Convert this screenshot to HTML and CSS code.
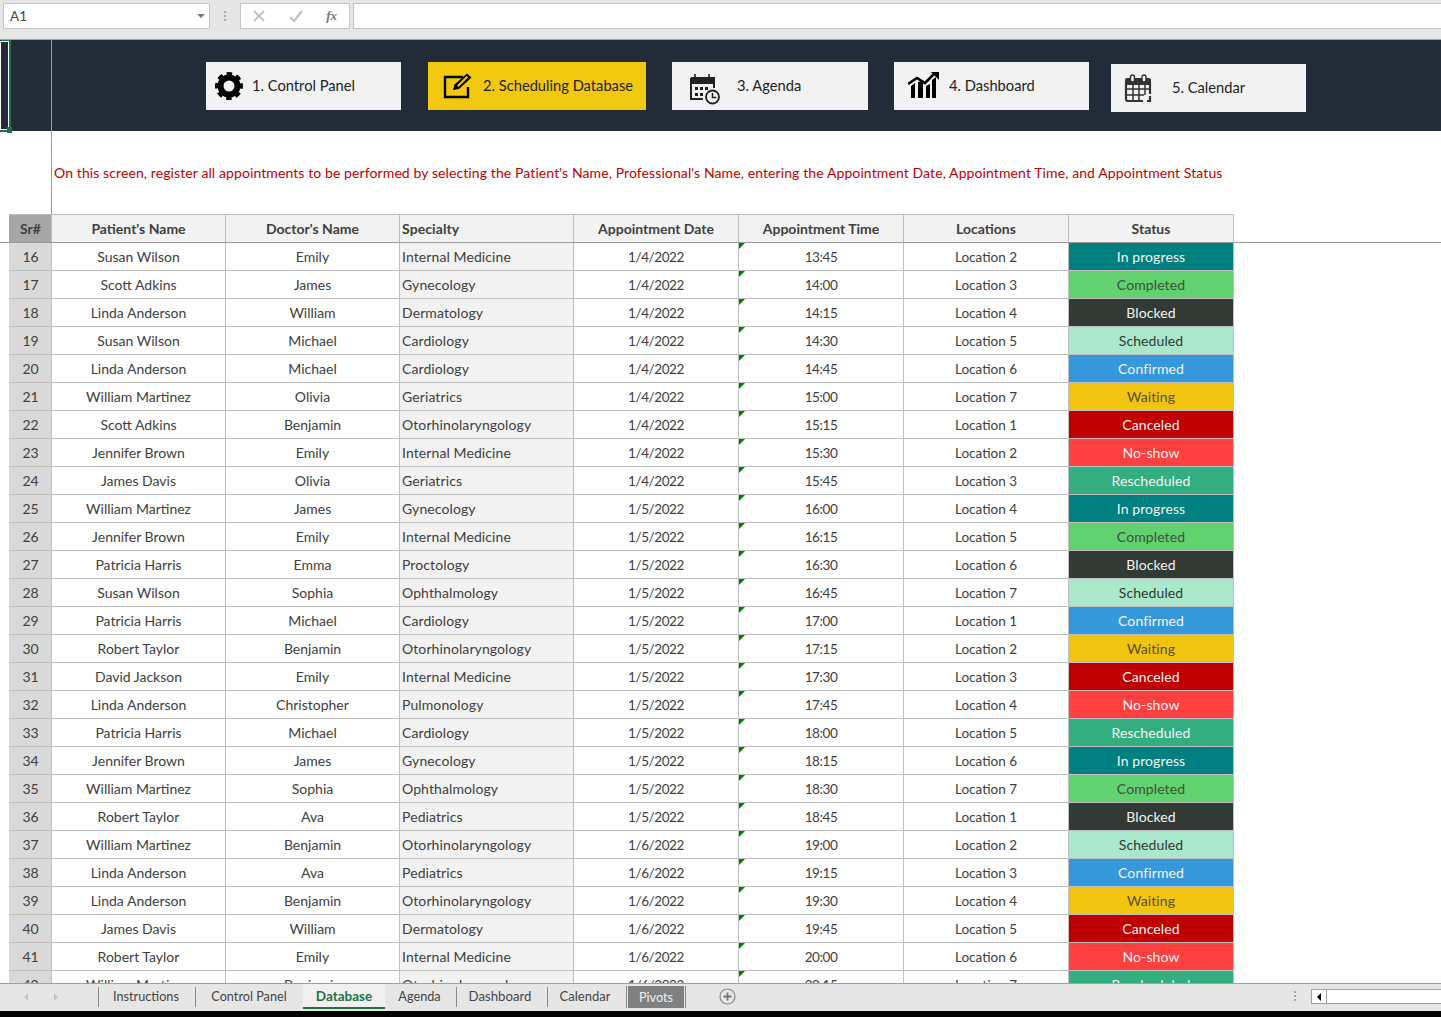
FILE: index.html
```html
<!DOCTYPE html>
<html lang="en">
<head>
    <meta charset="UTF-8">
    <meta name="viewport" content="width=device-width, initial-scale=1.0">
    <title>Scheduling Database</title>
    <link rel="stylesheet" href="styles.css">
</head>
<body>
    <div class="formula-bar">
        <div class="name-box">A1<span class="name-arrow"></span></div>
        <div class="bar-dots"></div>
        <div class="formula-buttons">
            <svg width="14" height="14" viewBox="0 0 14 14"><path d="M2 2l10 10M12 2L2 12" stroke="#c4c4c4" stroke-width="2" fill="none"/></svg>
            <svg width="14" height="14" viewBox="0 0 14 14"><path d="M1 8l4 4 8-10" stroke="#c4c4c4" stroke-width="2.4" fill="none"/></svg>
            <span class="fx">fx</span>
        </div>
        <div class="formula-input"></div>
    </div>

    <div class="sheet">
        <div class="frozen">
            <div class="banner">
                <div class="corner"></div>
                <div class="nav-item nav-control">
                    <svg width="30" height="30" viewBox="0 0 30 30">
                        <circle cx="15" cy="15" r="8.500" fill="none" stroke="#000" stroke-width="6"/>
                        <circle cx="15" cy="15" r="11.500" fill="none" stroke="#000" stroke-width="5" stroke-dasharray="5.030 4" transform="rotate(-12.500 15 15)"/>
                    </svg>
                    <span>1. Control Panel</span>
                </div>
                <div class="nav-item nav-database active">
                    <svg width="30" height="28" viewBox="0 0 30 28">
                        <path d="M20 5H2v20h23V15" fill="none" stroke="#000" stroke-width="2.400"/>
                        <path d="M10 18l1.500-5.500L24 1.500l4.500 4L16 17z" fill="#000"/>
                        <path d="M14 13.500l9.500-9.500 1.500 1.500-9.500 9.500z" fill="#f2c90f"/>
                    </svg>
                    <span>2. Scheduling Database</span>
                </div>
                <div class="nav-item nav-agenda">
                    <svg width="32" height="32" viewBox="0 0 32 32">
                        <path d="M2 5h23v10M2 5v21h12" fill="none" stroke="#222" stroke-width="2"/>
                        <path d="M2 5h23v6H2z" fill="#222"/>
                        <path d="M6 1v6M20 1v6" stroke="#222" stroke-width="1.600"/>
                        <path d="M6 14h3v3H6zM11 14h3v3h-3zM16 14h3v3h-3zM6 20h3v3H6zM11 20h3v3h-3z" fill="#222"/>
                        <circle cx="23.500" cy="24" r="6.500" fill="#f2f2f2" stroke="#222" stroke-width="1.800"/>
                        <path d="M23.500 20v4.500h4" fill="none" stroke="#222" stroke-width="1.600"/>
                    </svg>
                    <span>3. Agenda</span>
                </div>
                <div class="nav-item nav-dashboard">
                    <svg width="32" height="28" viewBox="0 0 32 28">
                        <path d="M0 12l9-6 8 5 10-10" fill="none" stroke="#000" stroke-width="2.600"/>
                        <path d="M23 0h8v8z" fill="#000"/>
                        <path d="M3 14l4-3v15H3zM10 10l5-1v17h-5zM18 14l4-2v14h-4zM24 8l4-3v21h-4z" fill="#000"/>
                    </svg>
                    <span>4. Dashboard</span>
                </div>
                <div class="nav-item nav-calendar">
                    <svg width="28" height="28" viewBox="0 0 28 28">
                        <path d="M1 6q0-2 2-2h22q2 0 2 2v5H1z" fill="#333"/>
                        <path d="M2 8v17q0 2 2 2h15M26 8v12M26 22v5h-3" fill="none" stroke="#333" stroke-width="2.200"/>
                        <rect x="6.500" y="1" width="4" height="7" rx="2" fill="#f2f2f2" stroke="#333" stroke-width="1.400"/>
                        <rect x="18" y="1" width="4" height="7" rx="2" fill="#f2f2f2" stroke="#333" stroke-width="1.400"/>
                        <path d="M2 15h24M2 21h18M9 10v17M15 10v17M21 10v11" fill="none" stroke="#333" stroke-width="1.500"/>
                    </svg>
                    <span>5. Calendar</span>
                </div>
            </div>
            <div class="note-row">
                <div class="corner"></div>
                <p class="note">On this screen, register all appointments to be performed by selecting the Patient's Name, Professional's Name, entering the Appointment Date, Appointment Time, and Appointment Status</p>
            </div>
            <div class="row head">
                <div class="sr">Sr#</div><div>Patient's Name</div><div>Doctor's Name</div><div class="spec">Specialty</div><div>Appointment Date</div><div>Appointment Time</div><div>Locations</div><div>Status</div>
            </div>
            <div class="cell-cursor"></div>
        </div>

        <div class="rows">
            <div class="row"><div class="sr">16</div><div>Susan Wilson</div><div>Emily</div><div class="spec">Internal Medicine</div><div class="date">1/4/2022</div><div class="time">13:45</div><div class="loc">Location 2</div><div class="st progress">In progress</div></div>
            <div class="row"><div class="sr">17</div><div>Scott Adkins</div><div>James</div><div class="spec">Gynecology</div><div class="date">1/4/2022</div><div class="time">14:00</div><div class="loc">Location 3</div><div class="st completed">Completed</div></div>
            <div class="row"><div class="sr">18</div><div>Linda Anderson</div><div>William</div><div class="spec">Dermatology</div><div class="date">1/4/2022</div><div class="time">14:15</div><div class="loc">Location 4</div><div class="st blocked">Blocked</div></div>
            <div class="row"><div class="sr">19</div><div>Susan Wilson</div><div>Michael</div><div class="spec">Cardiology</div><div class="date">1/4/2022</div><div class="time">14:30</div><div class="loc">Location 5</div><div class="st scheduled">Scheduled</div></div>
            <div class="row"><div class="sr">20</div><div>Linda Anderson</div><div>Michael</div><div class="spec">Cardiology</div><div class="date">1/4/2022</div><div class="time">14:45</div><div class="loc">Location 6</div><div class="st confirmed">Confirmed</div></div>
            <div class="row"><div class="sr">21</div><div>William Martinez</div><div>Olivia</div><div class="spec">Geriatrics</div><div class="date">1/4/2022</div><div class="time">15:00</div><div class="loc">Location 7</div><div class="st waiting">Waiting</div></div>
            <div class="row"><div class="sr">22</div><div>Scott Adkins</div><div>Benjamin</div><div class="spec">Otorhinolaryngology</div><div class="date">1/4/2022</div><div class="time">15:15</div><div class="loc">Location 1</div><div class="st canceled">Canceled</div></div>
            <div class="row"><div class="sr">23</div><div>Jennifer Brown</div><div>Emily</div><div class="spec">Internal Medicine</div><div class="date">1/4/2022</div><div class="time">15:30</div><div class="loc">Location 2</div><div class="st noshow">No-show</div></div>
            <div class="row"><div class="sr">24</div><div>James Davis</div><div>Olivia</div><div class="spec">Geriatrics</div><div class="date">1/4/2022</div><div class="time">15:45</div><div class="loc">Location 3</div><div class="st rescheduled">Rescheduled</div></div>
            <div class="row"><div class="sr">25</div><div>William Martinez</div><div>James</div><div class="spec">Gynecology</div><div class="date">1/5/2022</div><div class="time">16:00</div><div class="loc">Location 4</div><div class="st progress">In progress</div></div>
            <div class="row"><div class="sr">26</div><div>Jennifer Brown</div><div>Emily</div><div class="spec">Internal Medicine</div><div class="date">1/5/2022</div><div class="time">16:15</div><div class="loc">Location 5</div><div class="st completed">Completed</div></div>
            <div class="row"><div class="sr">27</div><div>Patricia Harris</div><div>Emma</div><div class="spec">Proctology</div><div class="date">1/5/2022</div><div class="time">16:30</div><div class="loc">Location 6</div><div class="st blocked">Blocked</div></div>
            <div class="row"><div class="sr">28</div><div>Susan Wilson</div><div>Sophia</div><div class="spec">Ophthalmology</div><div class="date">1/5/2022</div><div class="time">16:45</div><div class="loc">Location 7</div><div class="st scheduled">Scheduled</div></div>
            <div class="row"><div class="sr">29</div><div>Patricia Harris</div><div>Michael</div><div class="spec">Cardiology</div><div class="date">1/5/2022</div><div class="time">17:00</div><div class="loc">Location 1</div><div class="st confirmed">Confirmed</div></div>
            <div class="row"><div class="sr">30</div><div>Robert Taylor</div><div>Benjamin</div><div class="spec">Otorhinolaryngology</div><div class="date">1/5/2022</div><div class="time">17:15</div><div class="loc">Location 2</div><div class="st waiting">Waiting</div></div>
            <div class="row"><div class="sr">31</div><div>David Jackson</div><div>Emily</div><div class="spec">Internal Medicine</div><div class="date">1/5/2022</div><div class="time">17:30</div><div class="loc">Location 3</div><div class="st canceled">Canceled</div></div>
            <div class="row"><div class="sr">32</div><div>Linda Anderson</div><div>Christopher</div><div class="spec">Pulmonology</div><div class="date">1/5/2022</div><div class="time">17:45</div><div class="loc">Location 4</div><div class="st noshow">No-show</div></div>
            <div class="row"><div class="sr">33</div><div>Patricia Harris</div><div>Michael</div><div class="spec">Cardiology</div><div class="date">1/5/2022</div><div class="time">18:00</div><div class="loc">Location 5</div><div class="st rescheduled">Rescheduled</div></div>
            <div class="row"><div class="sr">34</div><div>Jennifer Brown</div><div>James</div><div class="spec">Gynecology</div><div class="date">1/5/2022</div><div class="time">18:15</div><div class="loc">Location 6</div><div class="st progress">In progress</div></div>
            <div class="row"><div class="sr">35</div><div>William Martinez</div><div>Sophia</div><div class="spec">Ophthalmology</div><div class="date">1/5/2022</div><div class="time">18:30</div><div class="loc">Location 7</div><div class="st completed">Completed</div></div>
            <div class="row"><div class="sr">36</div><div>Robert Taylor</div><div>Ava</div><div class="spec">Pediatrics</div><div class="date">1/5/2022</div><div class="time">18:45</div><div class="loc">Location 1</div><div class="st blocked">Blocked</div></div>
            <div class="row"><div class="sr">37</div><div>William Martinez</div><div>Benjamin</div><div class="spec">Otorhinolaryngology</div><div class="date">1/6/2022</div><div class="time">19:00</div><div class="loc">Location 2</div><div class="st scheduled">Scheduled</div></div>
            <div class="row"><div class="sr">38</div><div>Linda Anderson</div><div>Ava</div><div class="spec">Pediatrics</div><div class="date">1/6/2022</div><div class="time">19:15</div><div class="loc">Location 3</div><div class="st confirmed">Confirmed</div></div>
            <div class="row"><div class="sr">39</div><div>Linda Anderson</div><div>Benjamin</div><div class="spec">Otorhinolaryngology</div><div class="date">1/6/2022</div><div class="time">19:30</div><div class="loc">Location 4</div><div class="st waiting">Waiting</div></div>
            <div class="row"><div class="sr">40</div><div>James Davis</div><div>William</div><div class="spec">Dermatology</div><div class="date">1/6/2022</div><div class="time">19:45</div><div class="loc">Location 5</div><div class="st canceled">Canceled</div></div>
            <div class="row"><div class="sr">41</div><div>Robert Taylor</div><div>Emily</div><div class="spec">Internal Medicine</div><div class="date">1/6/2022</div><div class="time">20:00</div><div class="loc">Location 6</div><div class="st noshow">No-show</div></div>
            <div class="row"><div class="sr">42</div><div>William Martinez</div><div>Benjamin</div><div class="spec">Otorhinolaryngology</div><div class="date">1/6/2022</div><div class="time">20:15</div><div class="loc">Location 7</div><div class="st rescheduled">Rescheduled</div></div>
        </div>
    </div>

    <div class="tab-bar">
        <div class="tab-arrows">
            <svg width="6" height="10" viewBox="0 0 6 10"><path d="M5 1L1 5l4 4z" fill="#c4c4c4"/></svg>
            <svg width="6" height="10" viewBox="0 0 6 10"><path d="M1 1l4 4-4 4z" fill="#c4c4c4"/></svg>
        </div>
        <div class="tab tab-instructions">Instructions</div>
        <div class="tab tab-control">Control Panel</div>
        <div class="tab tab-active">Database</div>
        <div class="tab tab-agenda">Agenda</div>
        <div class="tab tab-dashboard">Dashboard</div>
        <div class="tab tab-calendar">Calendar</div>
        <div class="tab tab-pivots">Pivots</div>
        <svg class="tab-add" width="17" height="17" viewBox="0 0 17 17">
            <circle cx="8.500" cy="8.500" r="7.500" fill="none" stroke="#8a8a8a" stroke-width="1.200"/>
            <path d="M8.500 4.500v8M4.500 8.500h8" stroke="#777" stroke-width="1.800"/>
        </svg>
        <div class="tab-dots"></div>
        <div class="h-scroll">
            <div class="h-scroll-btn"><svg width="5" height="8" viewBox="0 0 5 8"><path d="M4 0L0 4l4 4z" fill="#000"/></svg></div>
        </div>
    </div>
    <div class="taskbar"></div>
</body>
</html>
```

FILE: styles.css
```css
* {
    box-sizing: border-box;
}

body {
    margin: 0;
    height: 1017px;
    overflow: hidden;
    display: flex;
    flex-direction: column;
    font-family: "Lato", "Liberation Sans", sans-serif;
    font-size: 14px;
    color: #404040;
    background-color: white;
}

/* formula bar */
.formula-bar {
    height: 40px;
    flex: none;
    display: flex;
    padding: 3px 0 0 3px;
    background-color: #e6e6e6;
    border-bottom: 1px solid #a0a0a0;
}

.name-box {
    width: 207px;
    height: 26px;
    padding-left: 6px;
    display: flex;
    align-items: center;
    justify-content: space-between;
    background-color: white;
    border: 1px solid #c6c6c6;
    color: #444;
    font-size: 13.5px;
}

.name-arrow {
    margin-right: 4px;
    border-left: 4px solid transparent;
    border-right: 4px solid transparent;
    border-top: 4px solid #777;
}

.bar-dots {
    width: 2px;
    height: 10px;
    margin: 8px 14px 0 14px;
    background: repeating-linear-gradient(#aaa 0, #aaa 2px, transparent 2px, transparent 4px);
}

.formula-buttons {
    width: 110px;
    height: 26px;
    padding: 0 12px 0 11px;
    display: flex;
    align-items: center;
    justify-content: space-between;
    background-color: white;
    border: 1px solid #c6c6c6;
}

.fx {
    font-family: "Liberation Serif", serif;
    font-style: italic;
    font-weight: bold;
    font-size: 13px;
    color: #777;
}

.formula-input {
    flex: 1;
    height: 26px;
    margin-left: 3px;
    background-color: white;
    border: 1px solid #c6c6c6;
    border-right: none;
}

/* sheet */
.sheet {
    flex: 1;
    min-height: 0;
    overflow: hidden;
}

.frozen {
    position: relative;
    border-bottom: 1px solid #9a9a9a;
}

.banner {
    height: 91px;
    display: flex;
    align-items: flex-start;
    background-color: #222b38;
}

.corner {
    width: 52px;
    height: 100%;
    flex: none;
    border-right: 1px solid #9a9a9a;
}

.nav-item {
    height: 48px;
    margin-top: 22px;
    display: flex;
    align-items: center;
    background-color: #f2f2f2;
    color: #222;
    font-size: 14.7px;
}

.nav-item span {
    padding-bottom: 2px;
}

.nav-item.active {
    background-color: #f2c90f;
}

.nav-control {
    width: 195px;
    margin-left: 154px;
    padding-left: 8px;
    gap: 8px;
}

.nav-database {
    width: 218px;
    margin-left: 27px;
    padding-left: 15px;
    gap: 10px;
}

.nav-agenda {
    width: 196px;
    margin-left: 26px;
    padding-left: 17px;
    gap: 16px;
}

.nav-agenda svg {
    margin-top: 5px;
}

.nav-dashboard {
    width: 195px;
    margin-left: 26px;
    padding-left: 14px;
    gap: 9px;
}

.nav-calendar {
    width: 195px;
    margin-left: 22px;
    margin-top: 24px;
    padding-left: 13px;
    gap: 20px;
}

.note-row {
    height: 83px;
    display: flex;
}

.note {
    margin: 33px 0 0 2px;
    color: #c00000;
    font-size: 14px;
    letter-spacing: 0.1px;
    line-height: 18px;
}

.cell-cursor {
    position: absolute;
    left: 0;
    top: 0;
    width: 11px;
    height: 92px;
    border-top: 1px solid #217346;
    border-right: 2px solid #217346;
    border-bottom: 2px solid #217346;
    box-shadow: inset 0 0 0 1px white;
}

.cell-cursor::after {
    content: "";
    position: absolute;
    right: -3px;
    bottom: -3px;
    width: 5px;
    height: 6px;
    background-color: #217346;
}

/* table */
.row {
    height: 28px;
    margin-left: 9px;
    display: grid;
    grid-template-columns: 43px 174px 174px 174px 165px 165px 165px 165px;
}

.row > div {
    position: relative;
    display: flex;
    align-items: center;
    justify-content: center;
    border-right: 1px solid #bfbfbf;
    border-bottom: 1px solid #bfbfbf;
    white-space: nowrap;
}

.row > .spec {
    justify-content: flex-start;
    padding-left: 2px;
    background-color: #f2f2f2;
    letter-spacing: 0.1px;
}

.row > .sr {
    padding-left: 1px;
    background-color: #d9d9d9;
}

.row > .date,
.row > .time {
    font-size: 13.5px;
    letter-spacing: -0.4px;
}

.row > .loc {
    font-size: 13.5px;
}

.head {
    font-weight: bold;
}

.head > div {
    background-color: #f2f2f2;
    border-top: 1px solid #bfbfbf;
    border-bottom: none !important;
}

.row.head > .sr {
    background-color: #a6a6a6;
}

.time::before {
    content: "";
    position: absolute;
    left: 0;
    top: 0;
    border-top: 6px solid #008000;
    border-right: 6px solid transparent;
}

.row > .st {
    letter-spacing: 0.1px;
}

.st.progress { background-color: #008080; color: #f4f4f4; }
.st.completed { background-color: #62d16f; color: #3f4f3f; }
.st.blocked { background-color: #313a35; color: #f4f4f4; }
.st.scheduled { background-color: #abe8cb; color: #2b3a33; }
.st.confirmed { background-color: #3498db; color: #f4f4f4; }
.st.waiting { background-color: #f1c40f; color: #5a5020; }
.st.canceled { background-color: #c00000; color: #f4f4f4; }
.st.noshow { background-color: #ff4040; color: #f4f4f4; }
.st.rescheduled { background-color: #33ae81; color: #f4f4f4; }

/* sheet tabs */
.tab-bar {
    height: 28px;
    flex: none;
    display: flex;
    align-items: center;
    padding-bottom: 2px;
    background-color: #e6e6e6;
    border-top: 1px solid #a0a0a0;
    color: #444;
    font-size: 12.7px;
}

.tab-arrows {
    width: 98px;
    padding-left: 23px;
    display: flex;
    gap: 24px;
}

.tab {
    height: 20px;
    padding: 0 2px 2px 0;
    display: flex;
    align-items: center;
    justify-content: center;
    border-left: 1px solid #8a8a8a;
}

.tab-instructions { width: 97px; }
.tab-control { width: 108px; padding-right: 1px; }
.tab-agenda { width: 71px; border-left: none; }
.tab-dashboard { width: 91px; padding-right: 4px; font-size: 13.2px; }
.tab-calendar { width: 79px; padding-right: 4px; font-size: 13px; }

.tab-active {
    width: 82px;
    height: 25px;
    align-self: flex-start;
    padding: 1px 0 0;
    border-left: none;
    background-color: #f0f0f0;
    border-bottom: 2px solid #217346;
    color: #217346;
    font-size: 13.5px;
    font-weight: bold;
}

.tab-pivots {
    width: 60px;
    height: 22px;
    border-left: 1px solid #8a8a8a;
    border-right: 1px solid #8a8a8a;
    background-color: #808080;
    background-clip: content-box;
    padding: 0 1px 0 1px;
    color: #eee;
}

.tab-add {
    margin-left: 33px;
}

.tab-dots {
    width: 2px;
    height: 12px;
    margin-left: 558px;
    background: repeating-linear-gradient(#aaa 0, #aaa 2px, transparent 2px, transparent 4px);
}

.h-scroll {
    flex: 1;
    height: 15px;
    margin-left: 15px;
    background-color: white;
    border: 1px solid #a0a0a0;
    border-right: none;
}

.h-scroll-btn {
    width: 15px;
    height: 100%;
    display: flex;
    align-items: center;
    justify-content: center;
    border-right: 1px solid #a0a0a0;
}

.taskbar {
    height: 6px;
    flex: none;
    background-color: black;
}
```
